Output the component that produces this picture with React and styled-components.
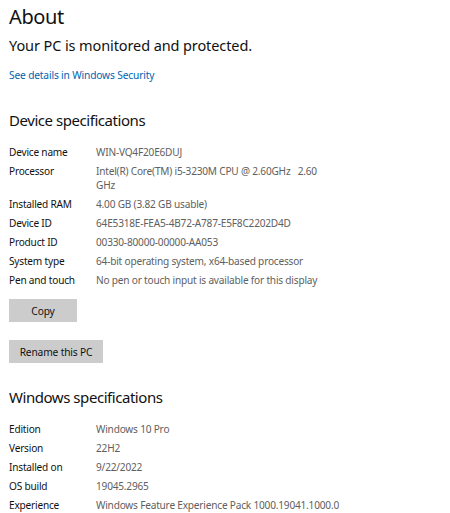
import React from "react";
import styled, { createGlobalStyle } from "styled-components";

const GlobalStyle = createGlobalStyle`
  body {
    margin: 0;
    background: #fff;
    font-family: "Noto Sans", "Open Sans", sans-serif;
    color: #000;
  }
`;

const device = [
  ["Device name", "WIN-VQ4F20E6DUJ"],
  ["Processor", "Intel(R) Core(TM) i5-3230M CPU @ 2.60GHz   2.60\nGHz"],
  ["Installed RAM", "4.00 GB (3.82 GB usable)"],
  ["Device ID", "64E5318E-FEA5-4B72-A787-E5F8C2202D4D"],
  ["Product ID", "00330-80000-00000-AA053"],
  ["System type", "64-bit operating system, x64-based processor"],
  ["Pen and touch", "No pen or touch input is available for this display"],
];

const windows = [
  ["Edition", "Windows 10 Pro"],
  ["Version", "22H2"],
  ["Installed on", "9/22/2022"],
  ["OS build", "19045.2965"],
  ["Experience", "Windows Feature Experience Pack 1000.19041.1000.0"],
];

const SpecList = ({ items }) => (
  <Specs>
    {items.map(([label, value]) => (
      <SpecRow key={label}>
        <Label>{label}</Label>
        <Value>{value}</Value>
      </SpecRow>
    ))}
  </Specs>
);

const App = () => {
  return (
    <Page>
      <GlobalStyle />
      <Title>About</Title>
      <Status>Your PC is monitored and protected.</Status>
      <Link>See details in Windows Security</Link>

      <Heading $top={27}>Device specifications</Heading>
      <SpecList items={device} />
      <Button $top={12}>Copy</Button>
      <Button $top={18} $wide>
        Rename this PC
      </Button>

      <Heading $top={23}>Windows specifications</Heading>
      <SpecList items={windows} />
    </Page>
  );
};

const Page = styled.div`
  display: flex;
  flex-direction: column;
  align-items: flex-start;
  padding: 1px 0 0 9px;
`;

const Title = styled.h1`
  margin: 0;
  font-size: 20px;
  font-weight: 400;
  letter-spacing: -0.4px;
  line-height: 32px;
  color: #111;
`;

const Status = styled.div`
  margin-top: 2px;
  font-size: 14.5px;
  letter-spacing: -0.1px;
  line-height: 20px;
  color: #111;
`;

const Link = styled.a`
  margin-top: 13px;
  font-size: 10.2px;
  letter-spacing: -0.15px;
  line-height: 14px;
  color: #0063b1;
  cursor: pointer;
`;

const Heading = styled.h2`
  margin: ${(p) => p.$top}px 0 0;
  font-size: 15px;
  font-weight: 400;
  letter-spacing: -0.45px;
  line-height: 22px;
  color: #111;
`;

const Specs = styled.div`
  margin-top: 14px;
  display: flex;
  flex-direction: column;
  gap: 5px;
`;

const SpecRow = styled.div`
  display: grid;
  grid-template-columns: 87px 260px;
  font-size: 10.1px;
  letter-spacing: -0.2px;
  line-height: 14px;
`;

const Label = styled.span`
  color: #111;
`;

const Value = styled.span`
  color: #606060;
  white-space: pre-wrap;
`;

const Button = styled.button`
  margin-top: ${(p) => p.$top}px;
  width: ${(p) => (p.$wide ? "94px" : "68px")};
  height: 23px;
  padding: 0;
  border: none;
  background: #cccccc;
  font-family: inherit;
  font-size: 10.2px;
  letter-spacing: -0.15px;
  color: #111;
`;

export default App;
